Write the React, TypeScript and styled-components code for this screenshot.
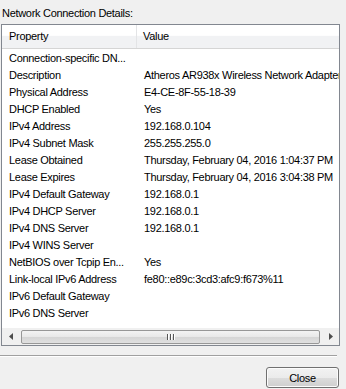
import React from 'react';
import styled, { createGlobalStyle } from 'styled-components';

const GlobalStyle = createGlobalStyle`
  html, body {
    margin: 0;
    padding: 0;
    background: #f0f0f0;
  }
  body {
    font-family: "Liberation Sans", Arial, sans-serif;
    font-size: 11px;
    letter-spacing: -0.3px;
    color: #000;
  }
`;

const Dialog = styled.div`
  width: 346px;
  height: 389px;
  display: flex;
  flex-direction: column;
  box-sizing: border-box;
`;

const Caption = styled.div`
  height: 24px;
  line-height: 26px;
  padding-left: 2px;
`;

const ListBox = styled.div`
  margin-left: 1px;
  width: 339px;
  height: 322px;
  box-sizing: border-box;
  border: 1px solid #828790;
  background: #fff;
  display: flex;
  flex-direction: column;
  overflow: hidden;
`;

const Header = styled.div`
  display: grid;
  grid-template-columns: 135px 1fr;
  height: 23px;
  border-bottom: 1px solid #d5d5d5;
  background: linear-gradient(#ffffff 0%, #ffffff 45%, #f1f2f4 50%, #f1f2f4 100%);
`;

const HeaderCell = styled.div<{ $divider?: boolean }>`
  padding-left: ${(p) => (p.$divider ? '7px' : '6px')};
  line-height: 23px;
  border-right: ${(p) => (p.$divider ? '1px solid #e3e4e6' : 'none')};
`;

const Rows = styled.div`
  flex: 1;
  padding-top: 1px;
`;

const Row = styled.div`
  display: grid;
  grid-template-columns: 136px 1fr;
  height: 17px;
  line-height: 17px;
  white-space: nowrap;
`;

const Cell = styled.div<{ $value?: boolean }>`
  padding-left: ${(p) => (p.$value ? '6px' : '7px')};
  overflow: hidden;
`;

const ScrollBar = styled.div`
  height: 17px;
  display: flex;
  align-items: center;
  background: #f0f0f0;
`;

const ArrowButton = styled.div`
  width: 17px;
  height: 17px;
  display: flex;
  align-items: center;
  justify-content: center;
`;

const Thumb = styled.div`
  flex: 1;
  height: 14px;
  margin: 0 2px;
  box-sizing: border-box;
  border: 1px solid #979797;
  border-radius: 2px;
  background: linear-gradient(#f3f3f3 0%, #e8e8e8 50%, #d5d5d5 51%, #e0e0e0 100%);
  display: flex;
  align-items: center;
  justify-content: center;
  gap: 1px;
`;

const Grip = styled.span`
  width: 1px;
  height: 6px;
  background: #555;
  box-shadow: 1px 0 0 #fff;
  margin-right: 1px;
`;

const Separator = styled.div`
  margin-top: 9px;
  width: 337px;
  height: 1px;
  background: #a0a0a0;
  border-bottom: 1px solid #fff;
`;

const Footer = styled.div`
  display: flex;
  justify-content: flex-end;
  padding-top: 10px;
  padding-right: 7px;
`;

const Button = styled.button`
  width: 73px;
  height: 21px;
  box-sizing: border-box;
  border: 1px solid #707070;
  border-radius: 3px;
  background: linear-gradient(#f2f2f2 0%, #ebebeb 50%, #dddddd 51%, #cfcfcf 100%);
  font-family: "Liberation Sans", Arial, sans-serif;
  font-size: 11px;
  letter-spacing: -0.3px;
  color: #000;
  padding: 0;
  box-shadow: inset 0 0 0 1px #fcfcfc;
`;

const rows: [string, string][] = [
  ['Connection-specific DN...', ''],
  ['Description', 'Atheros AR938x Wireless Network Adapter'],
  ['Physical Address', 'E4-CE-8F-55-18-39'],
  ['DHCP Enabled', 'Yes'],
  ['IPv4 Address', '192.168.0.104'],
  ['IPv4 Subnet Mask', '255.255.255.0'],
  ['Lease Obtained', 'Thursday, February 04, 2016 1:04:37 PM'],
  ['Lease Expires', 'Thursday, February 04, 2016 3:04:38 PM'],
  ['IPv4 Default Gateway', '192.168.0.1'],
  ['IPv4 DHCP Server', '192.168.0.1'],
  ['IPv4 DNS Server', '192.168.0.1'],
  ['IPv4 WINS Server', ''],
  ['NetBIOS over Tcpip En...', 'Yes'],
  ['Link-local IPv6 Address', 'fe80::e89c:3cd3:afc9:f673%11'],
  ['IPv6 Default Gateway', ''],
  ['IPv6 DNS Server', ''],
];

const Arrow = ({ dir }: { dir: 'left' | 'right' }) => (
  <svg width="4" height="7" viewBox="0 0 4 7">
    {dir === 'left' ? (
      <polygon points="4,0 0,3.5 4,7" fill="#4d4d4d" />
    ) : (
      <polygon points="0,0 4,3.5 0,7" fill="#4d4d4d" />
    )}
  </svg>
);

export default function App() {
  return (
    <Dialog>
      <GlobalStyle />
      <Caption>Network Connection Details:</Caption>
      <ListBox>
        <Header>
          <HeaderCell $divider>Property</HeaderCell>
          <HeaderCell>Value</HeaderCell>
        </Header>
        <Rows>
          {rows.map(([k, v]) => (
            <Row key={k}>
              <Cell>{k}</Cell>
              <Cell $value>{v}</Cell>
            </Row>
          ))}
        </Rows>
        <ScrollBar>
          <ArrowButton>
            <Arrow dir="left" />
          </ArrowButton>
          <Thumb>
            <Grip />
            <Grip />
            <Grip />
          </Thumb>
          <ArrowButton>
            <Arrow dir="right" />
          </ArrowButton>
        </ScrollBar>
      </ListBox>
      <Separator />
      <Footer>
        <Button>Close</Button>
      </Footer>
    </Dialog>
  );
}
